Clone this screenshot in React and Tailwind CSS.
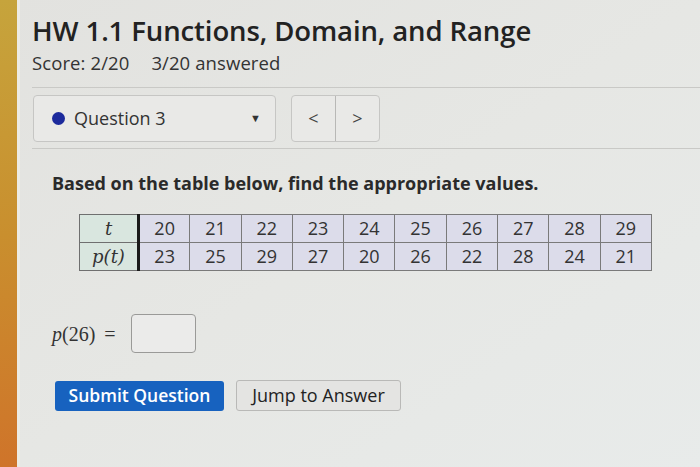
import React from "react";

const tRow = [20, 21, 22, 23, 24, 25, 26, 27, 28, 29];
const pRow = [23, 25, 29, 27, 20, 26, 22, 28, 24, 21];

function App() {
  return (
    <div
      className="flex h-[467px] w-[700px] overflow-hidden bg-gradient-to-br from-[#e2e2df] via-[#e6e7e4] to-[#e8ebea] text-[#2a2a2a]"
      style={{ fontFamily: '"Open Sans", "Noto Sans", sans-serif' }}
    >
      <div className="w-[17px] shrink-0 bg-gradient-to-b from-[#c6a43c] via-[#c98f2e] to-[#cf742a]" />
      <div className="w-[3px] shrink-0 bg-[#ecebe4]" />

      <div className="flex-1 pl-[12px]">
        <h1 className="pt-[14px] text-[27.5px] font-semibold leading-[34px] tracking-[-0.1px] text-[#222]">
          HW 1.1 Functions, Domain, and Range
        </h1>
        <div className="mt-[3px] flex gap-[22px] text-[18.5px] leading-[24px] tracking-[0.1px] text-[#333]">
          <span>Score: 2/20</span>
          <span>3/20 answered</span>
        </div>

        <div className="mt-[12px] border-t border-[#c9c9c6] pt-[7px]">
          <div className="flex items-center gap-[15px] pl-[1px]">
            <div className="flex h-[47px] w-[243px] items-center rounded-[4px] border border-[#c6c6c4] bg-[#e9e9e7] pl-[18px] pr-[14px]">
              <span className="h-[13px] w-[13px] rounded-full bg-[#1c2a9c]" />
              <span className="ml-[9px] text-[18px] text-[#333]">Question 3</span>
              <span className="ml-auto text-[11px] text-[#333]">▼</span>
            </div>
            <div className="flex h-[47px] w-[89px] rounded-[4px] border border-[#c6c6c4] bg-[#e9e9e7]">
              <div className="flex flex-1 items-center justify-center border-r border-[#b8b8b6] text-[18px] text-[#444]">
                &lt;
              </div>
              <div className="flex flex-1 items-center justify-center text-[18px] text-[#444]">
                &gt;
              </div>
            </div>
          </div>
        </div>

        <div className="mt-[6px] border-t border-[#c9c9c6] pl-[20px]">
          <p className="mt-[22px] text-[18px] font-bold leading-[24px] text-[#2a2a2a]">
            Based on the table below, find the appropriate values.
          </p>

          <table className="ml-[27px] mt-[19px] border-collapse text-[18px] leading-[27px] text-[#333]">
            <tbody>
              <tr>
                <td
                  className="w-[59px] border border-[#6f6f6f] border-r-[3px] border-r-[#1a1a1a] bg-[#d9e6df] text-center italic"
                  style={{ fontFamily: '"DejaVu Serif", "Liberation Serif", serif' }}
                >
                  t
                </td>
                {tRow.map((v) => (
                  <td key={v} className="w-[51.3px] border border-[#7a7a7a] bg-[#dcdcea] text-center">
                    {v}
                  </td>
                ))}
              </tr>
              <tr>
                <td
                  className="border border-[#6f6f6f] border-r-[3px] border-r-[#1a1a1a] bg-[#d9e6df] text-center italic"
                  style={{ fontFamily: '"DejaVu Serif", "Liberation Serif", serif' }}
                >
                  p(t)
                </td>
                {pRow.map((v, i) => (
                  <td key={i} className="border border-[#7a7a7a] bg-[#dcdcea] text-center">
                    {v}
                  </td>
                ))}
              </tr>
            </tbody>
          </table>

          <div className="mt-[43px] flex items-center">
            <span
              className="pl-[-2px] text-[20px] text-[#333]"
              style={{ fontFamily: '"Liberation Serif", "DejaVu Serif", serif' }}
            >
              <i>p</i>(26) <span className="ml-[4px]">=</span>
            </span>
            <div className="ml-[15px] h-[39px] w-[65px] rounded-[4px] border border-[#9a9a98] bg-[#ebebea]" />
          </div>

          <div className="mt-[27px] flex items-center gap-[12px] pl-[3px]">
            <button className="h-[30px] w-[169px] rounded-[3px] bg-[#1762bf] text-[17.5px] font-semibold text-white">
              Submit Question
            </button>
            <button className="h-[31px] w-[165px] rounded-[3px] border border-[#b9b9b7] bg-[#e4e4e2] text-[18px] text-[#222]">
              Jump to Answer
            </button>
          </div>
        </div>
      </div>
    </div>
  );
}

export default App;
